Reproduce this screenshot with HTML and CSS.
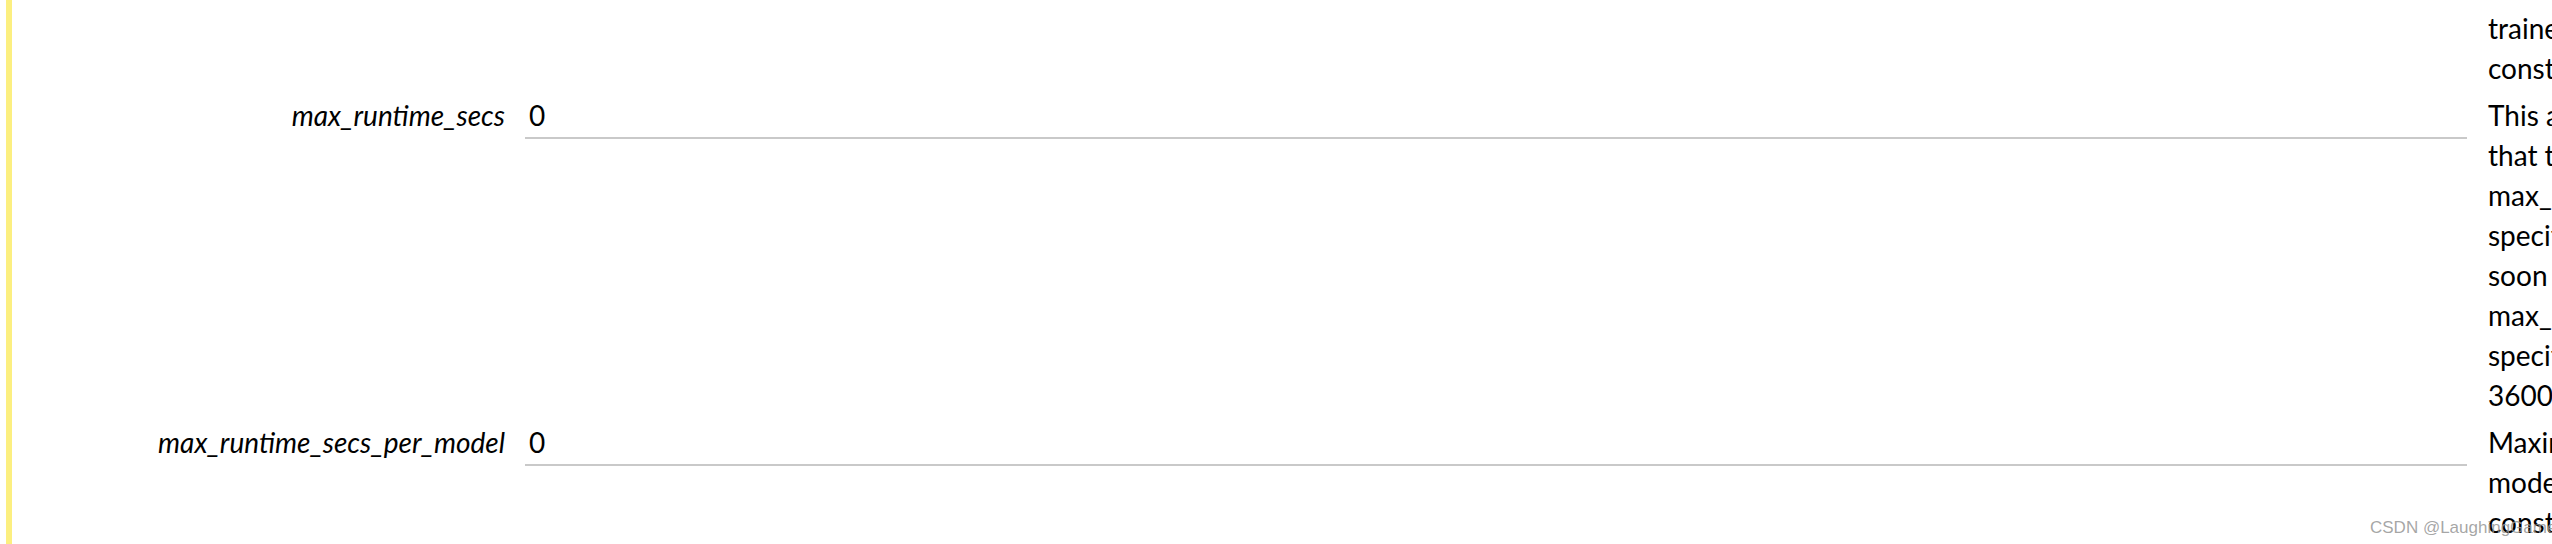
FILE: index.html
```html
<!DOCTYPE html>
<html lang="en">
<head>
<meta charset="utf-8">
<title>AutoML parameters</title>
<link rel="stylesheet" href="styles.css">
</head>
<body>
<div class="page">
  <div class="params">
    <div class="row">
      <div class="label"></div>
      <div class="field"></div>
      <div class="desc">
        <span class="line">trained in the AutoML run, excluding the Stacked Ensemble models. Defaults to 0 (no</span>
        <span class="line">constraint).</span>
      </div>
    </div>
    <div class="row">
      <label class="label" for="mrs">max_runtime_secs</label>
      <div class="field"><input id="mrs" class="input" type="text" value="0"></div>
      <div class="desc">
        <span class="line">This argument specifies the maximum time</span>
        <span class="line">that the AutoML process will run for. If both</span>
        <span class="line">max_runtime_secs and max_models are</span>
        <span class="line">specified, then the AutoML run will stop as</span>
        <span class="line">soon as it hits either of these limits. If neither</span>
        <span class="line">max_runtime_secs nor max_models are</span>
        <span class="line">specified, then max_runtime_secs defaults to</span>
        <span class="line">3600 seconds (1 hour).</span>
      </div>
    </div>
    <div class="row">
      <label class="label" for="mrspm">max_runtime_secs_per_model</label>
      <div class="field"><input id="mrspm" class="input" type="text" value="0"></div>
      <div class="desc">
        <span class="line">Maximum runtime in seconds dedicated to each individual</span>
        <span class="line">model training process. Use 0 to disable. Defaults to 0 (no</span>
        <span class="line">constraint).</span>
      </div>
    </div>
  </div>
</div>
<div class="watermark">CSDN @LaughingGame</div>
</body>
</html>
```
FILE: styles.css
```css
html, body {
  margin: 0;
  padding: 0;
  background: #ffffff;
}
body {
  width: 2552px;
  height: 544px;
  overflow: hidden;
  position: relative;
  font-family: Lato, "Open Sans", sans-serif;
  font-size: 28px;
  line-height: 40px;
  color: #000000;
}
.page {
  margin-left: 6px;
  border-left: 6px solid #fcef80;
  min-height: 544px;
}
.params {
  display: flex;
  flex-direction: column;
  padding-top: 5px;
}
.row {
  display: grid;
  grid-template-columns: 513px 1963px 900px;
  align-items: start;
  padding: 3px 0 4px;
}
.label {
  display: block;
  padding-right: 20px;
  text-align: right;
  font-style: italic;
  white-space: nowrap;
}
.field {
  padding-right: 21px;
}
.input {
  display: block;
  box-sizing: border-box;
  width: 100%;
  height: 44px;
  margin: 0;
  padding: 0 4px 2px;
  border: none;
  border-bottom: 2px solid #c9c9c9;
  background: transparent;
  font-family: inherit;
  font-size: 28px;
  line-height: 40px;
  color: #000000;
  outline: none;
}
.desc {
  white-space: nowrap;
}
.line {
  display: block;
}
.watermark {
  position: absolute;
  left: 2370px;
  top: 518px;
  font-family: "Liberation Sans", Arial, sans-serif;
  font-size: 17px;
  line-height: 20px;
  color: rgba(150, 150, 150, 0.85);
  white-space: nowrap;
}
```
